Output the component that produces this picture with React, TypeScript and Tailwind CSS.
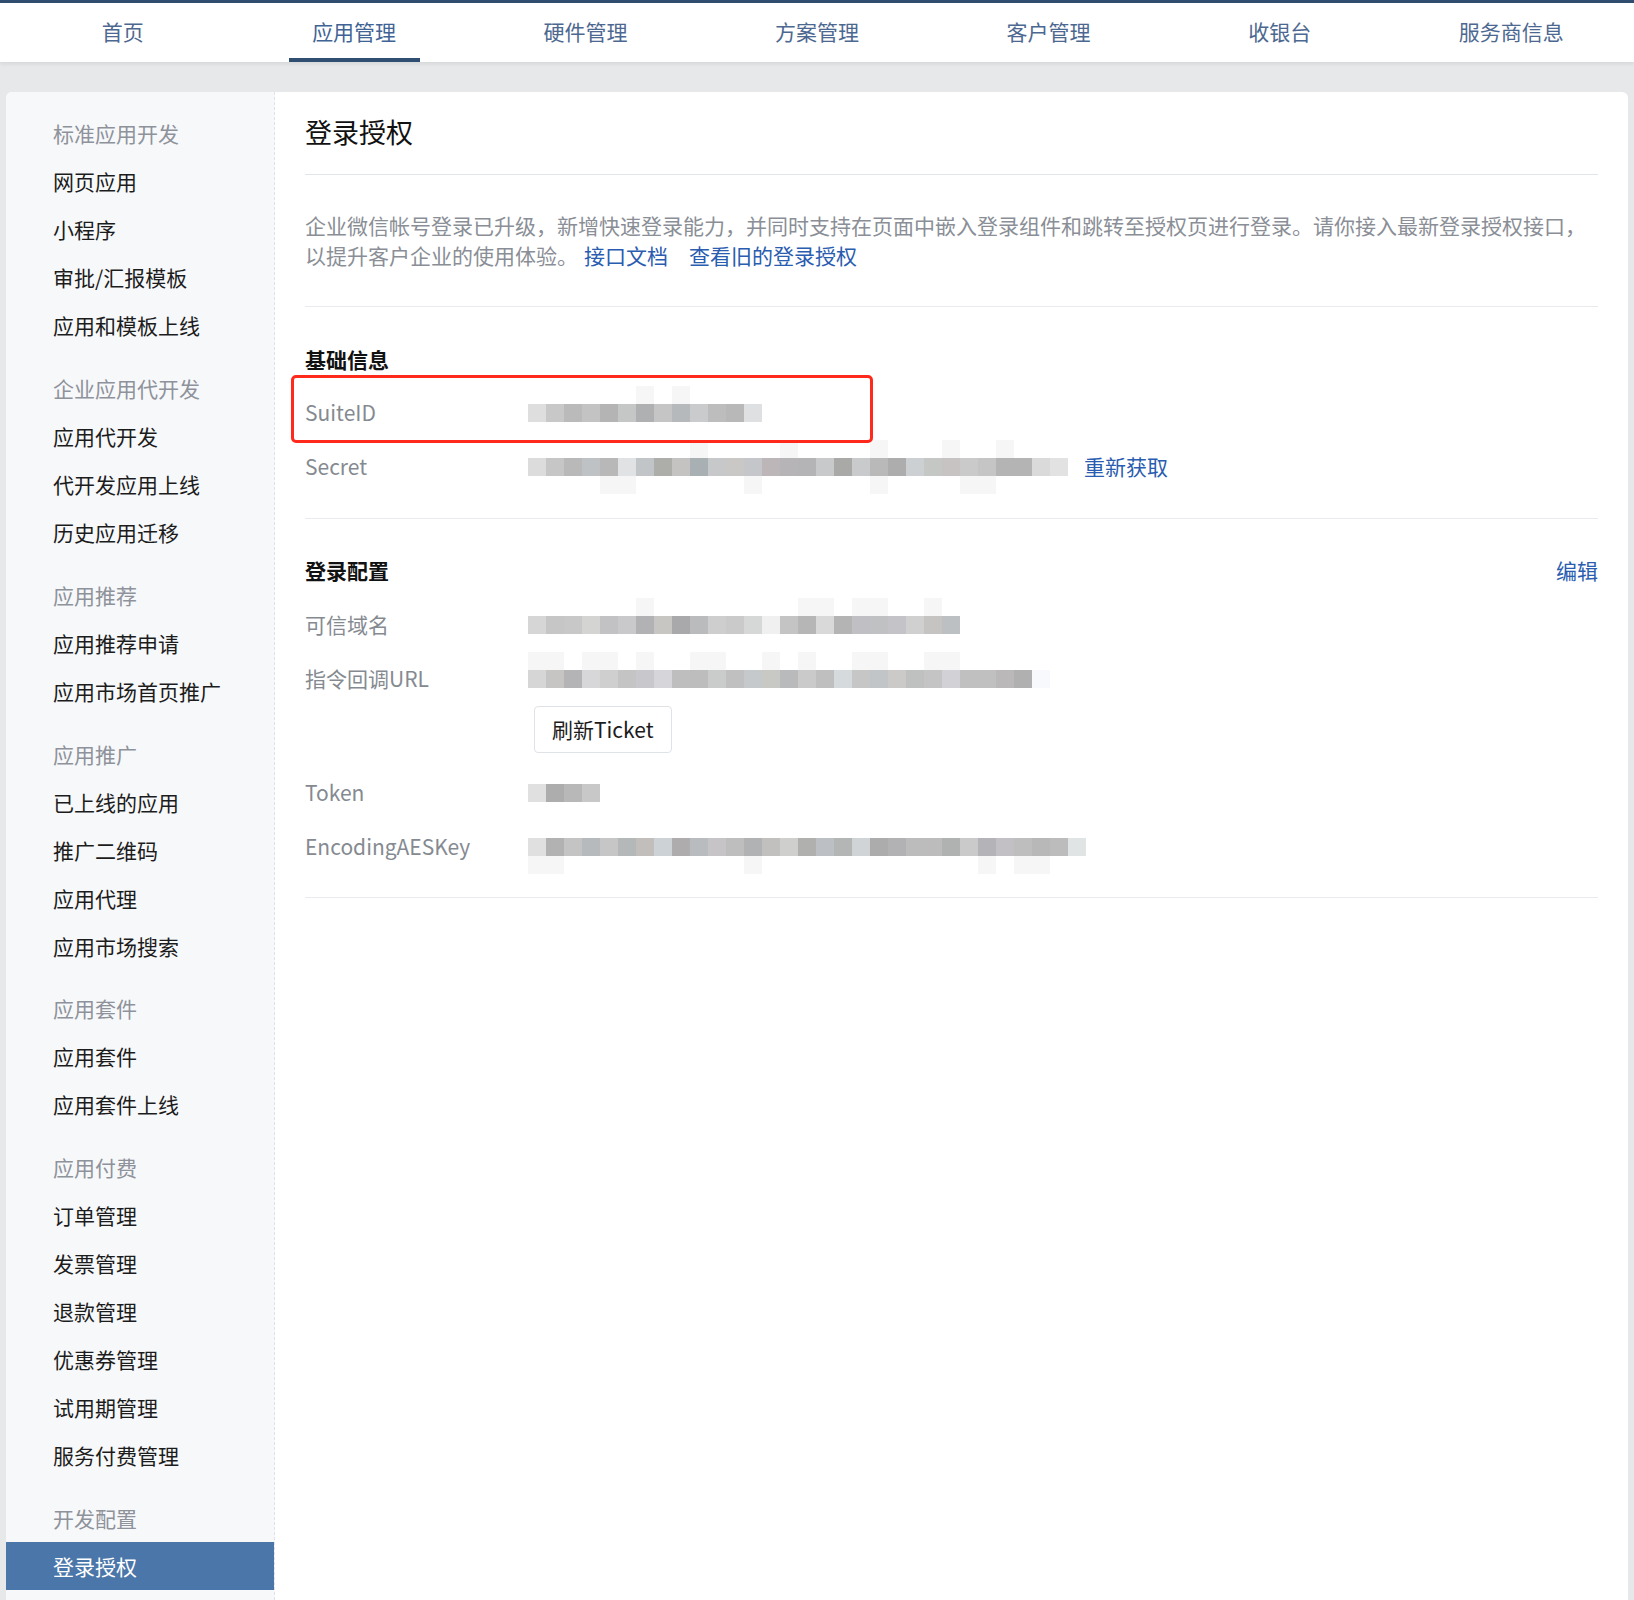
const navItems = ["首页", "应用管理", "硬件管理", "方案管理", "客户管理", "收银台", "服务商信息"];

const groups: { title: string; items: string[] }[] = [
  { title: "标准应用开发", items: ["网页应用", "小程序", "审批/汇报模板", "应用和模板上线"] },
  { title: "企业应用代开发", items: ["应用代开发", "代开发应用上线", "历史应用迁移"] },
  { title: "应用推荐", items: ["应用推荐申请", "应用市场首页推广"] },
  { title: "应用推广", items: ["已上线的应用", "推广二维码", "应用代理", "应用市场搜索"] },
  { title: "应用套件", items: ["应用套件", "应用套件上线"] },
  { title: "应用付费", items: ["订单管理", "发票管理", "退款管理", "优惠券管理", "试用期管理", "服务付费管理"] },
  { title: "开发配置", items: ["登录授权"] },
];

const blurs = {
  suite: {
    mid: ["#dededf", "#c8c8c8", "#bababa", "#c3c3c3", "#b4b4b4", "#c5c7c7", "#aeb0b2", "#c5c5c5", "#b5b9bb", "#c9cbcc", "#bdbdbe", "#b8b8b8", "#dfe0e1"],
    top: [6, 8],
    bottom: [],
  },
  secret: {
    mid: ["#dcdcdc", "#c6c6c6", "#b9b9b9", "#bfc2c4", "#b8b8b8", "#e0e2e4", "#c2c5c7", "#adadaa", "#c5c2c2", "#a9b0b4", "#c6c8ca", "#c9c8c6", "#c4c6c9", "#bdb6b9", "#b7b4b7", "#b4b3b5", "#c8c9cb", "#a9aaa8", "#c9cacb", "#b9b9b9", "#adadad", "#cdd0d2", "#c5c7c5", "#c7c3c3", "#cacaca", "#c5c5c5", "#b4b4b4", "#b4b4b4", "#dadada", "#e2e2e2"],
    top: [9, 14, 19, 23, 26],
    bottom: [4, 5, 12, 19, 24, 25],
  },
  domain: {
    mid: ["#d6d6d6", "#c6c6c6", "#c8c8c9", "#d4d4d2", "#c2c2c4", "#c9c9cb", "#b2b2b4", "#c8c6c3", "#a9a9ab", "#b9bbbc", "#cecece", "#cacaca", "#d6d8d8", "#f0f0f0", "#c4c4c4", "#b6b6b6", "#d9d9d9", "#b4b4b4", "#c0c0c4", "#c0c1c3", "#c4c4c8", "#d0d0d0", "#c6c4c2", "#bdc0c2"],
    top: [6, 15, 16, 18, 19, 22],
    bottom: [],
  },
  url: {
    mid: ["#d6d6d6", "#c7c4c4", "#b4b4b6", "#d7d7d9", "#cfcfcf", "#c4c4c4", "#c8c8cc", "#d6d6da", "#bebebe", "#bdbdbd", "#cacbcb", "#c0c0c0", "#c6c9cb", "#c8c8c4", "#b8babc", "#cacaca", "#bfbfbf", "#d5dadc", "#c6c6c6", "#c2c5c8", "#cccac8", "#bfc0c0", "#c4c4c4", "#d2d2d6", "#c0c0c0", "#c0c0c0", "#bab8b8", "#b0b0b0", "#f8f9fc"],
    top: [0, 1, 3, 4, 6, 9, 10, 13, 15, 18, 19, 22, 23],
    bottom: [],
  },
  token: {
    mid: ["#e0e0e0", "#adadad", "#b8b8b8", "#c8c8c8"],
    top: [],
    bottom: [],
  },
  aes: {
    mid: ["#e0e0e0", "#b2b2b2", "#c4c4c4", "#b6babc", "#c6c6c6", "#b4b8b8", "#c2bebc", "#cdd2d6", "#aeacac", "#b8bcbe", "#c6c4c6", "#bebebe", "#b0b2b4", "#c2c0be", "#cfcfcd", "#b0b0ae", "#bcc0c4", "#b4b6b6", "#d0d4d6", "#acacac", "#b2b2b4", "#bcbcbc", "#bcbcbc", "#b0b2b2", "#cacaca", "#b4b4b8", "#c2c0c4", "#bebebe", "#b8b8b8", "#bcbcbc", "#e0e4e4"],
    top: [],
    bottom: [0, 1, 12, 25, 27, 28],
  },
};

// pixelated placeholder for masked values, 18px cells, 3 rows
function Blur({ mid, top, bottom }: { mid: string[]; top: number[]; bottom: number[] }) {
  const faintRow = (marks: number[]) => (
    <div className="flex">
      {mid.map((_, i) => (
        <div
          key={i}
          className="h-[18px] w-[18px]"
          style={{ backgroundColor: marks.includes(i) ? "#f6f6f6" : "transparent" }}
        />
      ))}
    </div>
  );
  return (
    <div className="flex flex-col">
      {faintRow(top)}
      <div className="flex">
        {mid.map((c, i) => (
          <div key={i} className="h-[18px] w-[18px]" style={{ backgroundColor: c }} />
        ))}
      </div>
      {faintRow(bottom)}
    </div>
  );
}

function Row({ label, children }: { label: string; children?: React.ReactNode }) {
  return (
    <div className="flex h-[54px] items-center">
      <div className="w-[223px] shrink-0 text-[21px] text-[#858a91]">{label}</div>
      {children}
    </div>
  );
}

export default function App() {
  return (
    <div
      className="min-h-screen bg-[#e7e8ea] text-[21px]"
      style={{ fontFamily: '"Noto Sans CJK SC", "Noto Sans", sans-serif' }}
    >
      <header className="border-t-[3px] border-[#304d6f] bg-white shadow-[0_2px_4px_rgba(0,0,0,0.08)]">
        <nav className="grid h-[59px] grid-cols-7 px-[7px]">
          {navItems.map((item, i) => (
            <div key={item} className="flex justify-center">
              <div
                className={
                  i === 1
                    ? "flex h-full w-[131px] items-center justify-center border-b-4 border-[#2f4e72] pt-[2px] text-[#3f6394]"
                    : "flex h-full items-center justify-center pb-[2px] text-[#4d6890]"
                }
              >
                {item}
              </div>
            </div>
          ))}
        </nav>
      </header>

      <div className="px-[6px] pt-[30px]">
        <div className="flex overflow-hidden rounded-t-[6px] bg-white">
          <aside className="w-[269px] shrink-0 border-r border-dashed border-[#dfe2e7] bg-[#f7f8fa] pb-[20px] pt-[17px]">
            {groups.map((g, gi) => (
              <div key={g.title} className={gi === 0 ? "" : gi === 4 ? "mt-[14px]" : "mt-[15px]"}>
                <div className="h-[48px] pl-[47px] leading-[48px] text-[#8e929a]">{g.title}</div>
                {g.items.map((item) => (
                  <div
                    key={item}
                    className={
                      item === "登录授权"
                        ? "h-[48px] bg-[#4a76a9] pl-[47px] leading-[48px] text-white"
                        : "h-[48px] pl-[47px] leading-[48px] text-[#1c1c1c]"
                    }
                  >
                    {item}
                  </div>
                ))}
              </div>
            ))}
          </aside>

          <main className="flex-1 px-[30px] pt-[20px]">
            <h1 className="border-b border-[#e1e5ea] pb-[22px] text-[27px] leading-[40px] text-[#111]">登录授权</h1>

            <div className="border-b border-[#e8eaee] pb-[36px] pt-[35px] leading-[30px] text-[#8a8e96]">
              <p>企业微信帐号登录已升级，新增快速登录能力，并同时支持在页面中嵌入登录组件和跳转至授权页进行登录。请你接入最新登录授权接口，</p>
              <p className="flex">
                <span>以提升客户企业的使用体验。</span>
                <a className="ml-[6px] text-[#2a5cb0]">接口文档</a>
                <a className="ml-[21px] text-[#2a5cb0]">查看旧的登录授权</a>
              </p>
            </div>

            <section className="border-b border-[#e8eaee] pb-[24px] pt-[37px]">
              <h2 className="mb-[12px] font-bold leading-[30px] text-[#111]">基础信息</h2>
              <div className="relative">
                <Row label="SuiteID">
                  <Blur {...blurs.suite} />
                </Row>
                <div className="absolute -left-[14px] -top-[11px] h-[68px] w-[582px] rounded-[5px] border-[3px] border-[#ff2a1c]" />
              </div>
              <Row label="Secret">
                <Blur {...blurs.secret} />
                <a className="ml-[16px] text-[#2a5cb0]">重新获取</a>
              </Row>
            </section>

            <section className="border-b border-[#e8eaee] pb-[23px] pt-[36px]">
              <div className="mb-[13px] flex items-center justify-between leading-[30px]">
                <h2 className="font-bold text-[#111]">登录配置</h2>
                <a className="text-[#2a5cb0]">编辑</a>
              </div>
              <Row label="可信域名">
                <Blur {...blurs.domain} />
              </Row>
              <Row label="指令回调URL">
                <Blur {...blurs.url} />
              </Row>
              <div className="pl-[229px]">
                <button className="h-[47px] rounded-[4px] border border-[#dfe2e6] bg-white px-[17px] text-[#1c1c1c]">
                  刷新Ticket
                </button>
              </div>
              <div className="mt-[13px]">
                <Row label="Token">
                  <Blur {...blurs.token} />
                </Row>
                <Row label="EncodingAESKey">
                  <Blur {...blurs.aes} />
                </Row>
              </div>
            </section>
          </main>
        </div>
      </div>
    </div>
  );
}
